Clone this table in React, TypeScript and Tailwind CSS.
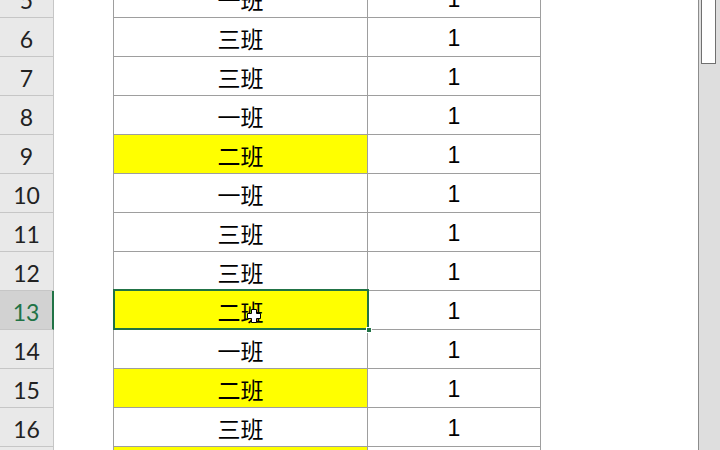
import React from 'react';

type Row = { n: number; name: string; yellow?: boolean; selected?: boolean };

const rows: Row[] = [
  { n: 5, name: '一班' },
  { n: 6, name: '三班' },
  { n: 7, name: '三班' },
  { n: 8, name: '一班' },
  { n: 9, name: '二班', yellow: true },
  { n: 10, name: '一班' },
  { n: 11, name: '三班' },
  { n: 12, name: '三班' },
  { n: 13, name: '二班', yellow: true, selected: true },
  { n: 14, name: '一班' },
  { n: 15, name: '二班', yellow: true },
  { n: 16, name: '三班' },
  { n: 17, name: '二班', yellow: true },
];

function CellCursor() {
  return (
    <svg
      className="absolute left-[132px] top-[17px]"
      width="16"
      height="16"
      viewBox="0 0 16 16"
    >
      <path
        d="M5.5 1.5h5v4h4v5h-4v4h-5v-4h-4v-5h4z"
        fill="#fff"
        stroke="#000"
        strokeWidth="1"
      />
    </svg>
  );
}

function SheetRow({ row }: { row: Row }) {
  return (
    <div className="flex h-[39px]">
      {row.selected ? (
        <div className="flex w-[54px] shrink-0 items-center justify-center border-b border-r-2 border-b-[#c6c6c6] border-r-[#217346] bg-[#d2d2d2] pt-[4px] font-['Lato',sans-serif] text-[23px] text-[#217346]">
          {row.n}
        </div>
      ) : (
        <div className="flex w-[54px] shrink-0 items-center justify-center border-b border-r border-[#c6c6c6] bg-[#e9e9e9] pt-[4px] font-['Lato',sans-serif] text-[23px] text-[#222]">
          {row.n}
        </div>
      )}
      <div className="w-[59px] shrink-0 bg-white" />
      <div
        className={`relative flex w-[254px] shrink-0 items-center justify-center border-b border-l border-[#9e9e9e] pt-[2px] font-['Noto_Sans_CJK_SC',sans-serif] text-[23px] leading-none text-black ${
          row.yellow ? 'bg-[#ffff00]' : 'bg-white'
        }`}
      >
        {row.name}
        {row.selected && (
          <>
            <div className="pointer-events-none absolute -bottom-[1px] -left-[1px] -right-[2px] -top-[2px] border-2 border-[#217346]" />
            <div className="absolute -bottom-[4px] -right-[5px] h-[6px] w-[6px] border border-white bg-[#217346]" />
            <CellCursor />
          </>
        )}
      </div>
      <div className="flex w-[174px] shrink-0 items-center justify-center border-b border-l border-r border-[#9e9e9e] bg-white pt-[3px] font-['Liberation_Sans',sans-serif] text-[23px] leading-none text-black">
        1
      </div>
      <div className="flex-1 bg-white" />
    </div>
  );
}

export default function App() {
  return (
    <div className="flex h-[450px] w-[720px] overflow-hidden bg-white">
      <div className="flex-1 overflow-hidden">
        <div className="-mt-[21px]">
          {rows.map((r) => (
            <SheetRow key={r.n} row={r} />
          ))}
        </div>
      </div>
      <div className="flex w-[22px] shrink-0 flex-col border-l border-[#8c8c8c] bg-[#dedede]">
        <div className="ml-[2px] h-[64px] w-[15px] border border-t-0 border-[#707070] bg-white" />
      </div>
    </div>
  );
}
